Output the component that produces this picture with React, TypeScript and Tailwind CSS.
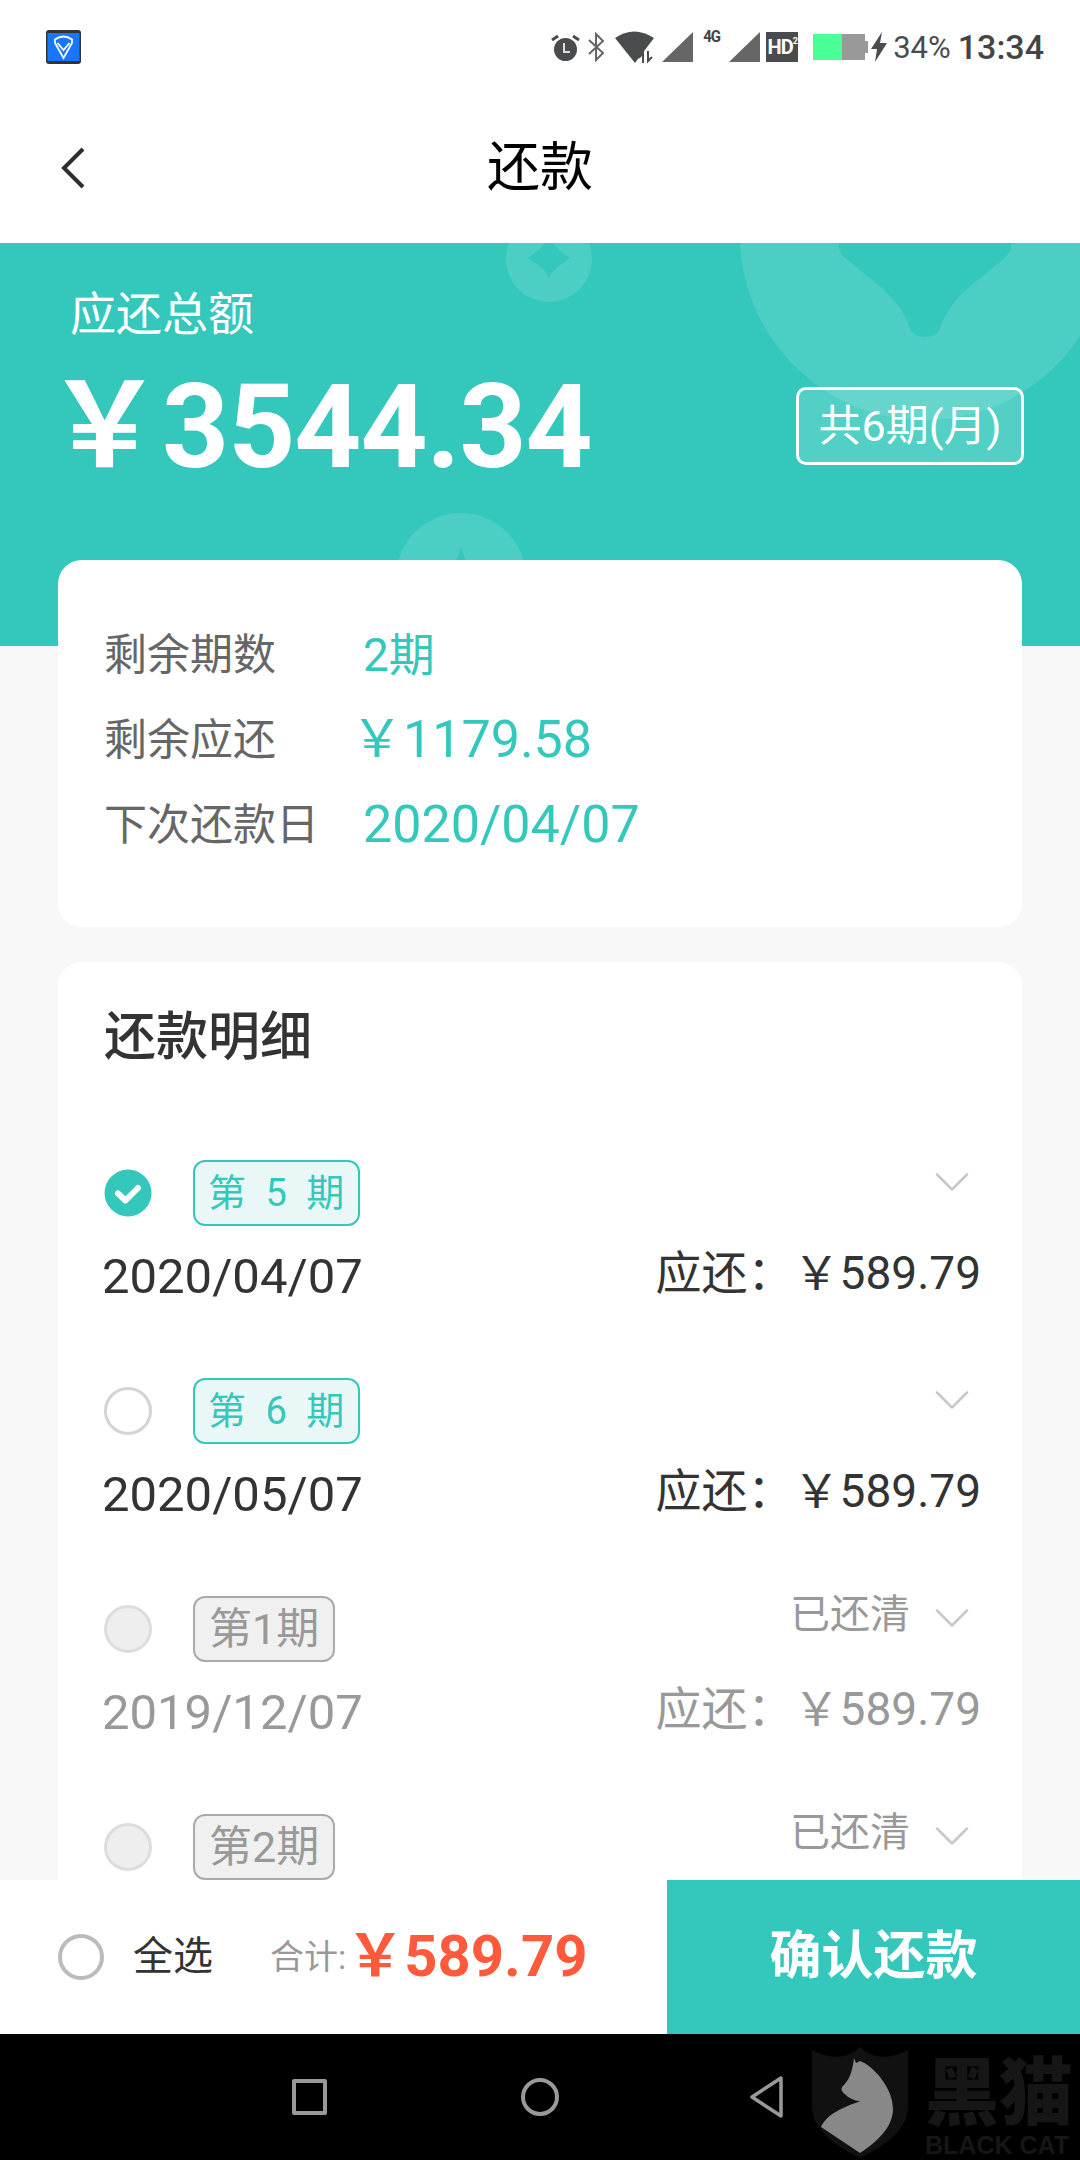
import { ChevronDown } from "lucide-react";

const installments = [
  { tag: "第 5 期", date: "2020/04/07", state: "checked" },
  { tag: "第 6 期", date: "2020/05/07", state: "open" },
  { tag: "第1期", date: "2019/12/07", state: "paid" },
  { tag: "第2期", state: "paid" },
];

function StatusBar() {
  return (
    <div className="h-[70px] shrink-0 flex items-center justify-between pl-[46px] pr-[36px] pt-[24px] bg-white">
      {/* App shield */}
      <svg width="35" height="34" viewBox="0 0 35 34">
        <rect x="0" y="0" width="35" height="34" rx="3" fill="#333" />
        <rect x="1.5" y="3" width="32" height="28" fill="#1677ff" />
        <path d="M9 9.5 Q17.5 3.5 26 9.5 L26 13 L17.5 28 L9 13 Z" fill="none" stroke="#fff" strokeWidth="1.8" />
        <path d="M11.5 13 L17.5 20 L23.5 13" fill="none" stroke="#fff" strokeWidth="1.8" />
      </svg>

      <div className="flex items-center text-[#444]">
        {/* Alarm */}
        <svg width="31" height="30" viewBox="0 0 31 30" className="mr-[6px]">
          <circle cx="15.5" cy="17.5" r="11.5" fill="#4a4b4d" />
          <path d="M2 8 L8 4 M29 8 L23 4" stroke="#4a4b4d" strokeWidth="3" />
          <path d="M14 11 V20 H20" fill="none" stroke="#ddd" strokeWidth="2" />
        </svg>
        {/* Bluetooth */}
        <svg width="19" height="30" viewBox="0 0 19 30" className="mr-[9px]">
          <path d="M2 8 L16 21 L9 28 V2 L16 9 L2 22" fill="none" stroke="#666" strokeWidth="2" />
        </svg>
        {/* Wifi */}
        <svg width="40" height="33" viewBox="0 0 40 33" className="mr-[7px]">
          <path d="M0 7 Q19 -6 39 7 L20 32 Z" fill="#4a4b4d" />
          <path d="M28 32 V22 L24 27 M33 20 V30 L37 26" fill="none" stroke="#4a4b4d" strokeWidth="2" />
        </svg>
        {/* Signal 1 */}
        <svg width="31" height="30" viewBox="0 0 31 30" className="mr-[10px]">
          <path d="M0 30 L31 0 V30 Z" fill="#666" />
        </svg>
        <span className="w-[20px] mr-[6px] self-start font-bold text-[15px] leading-[15px] text-[#444] tracking-[-1px] scale-y-110">4G</span>
        {/* Signal 2 */}
        <svg width="31" height="30" viewBox="0 0 31 30" className="mr-[6px]">
          <path d="M0 30 L31 0 V30 Z" fill="#666" />
        </svg>
        <div className="w-[32px] h-[30px] mr-[15px] bg-[#4a4b4d] text-white flex items-center justify-center font-bold text-[20px] leading-none tracking-[-1px]">
          HD<span className="text-[9px] self-start mt-[5px]">2</span>
        </div>
        {/* Battery */}
        <div className="flex items-center mr-[3px]">
          <div className="w-[29px] h-[26px] bg-[#4aff94]" />
          <div className="w-[23px] h-[26px] bg-[#999]" />
          <div className="w-[3px] h-[12px] bg-[#999]" />
        </div>
        <svg width="16" height="30" viewBox="0 0 16 30" className="mr-[6px]">
          <path d="M11 0 L0 17 H6 L4 30 L16 11 H9 Z" fill="#4a4b4d" />
        </svg>
        <span className="text-[31px] leading-none mr-[7px] text-[#4a4b4d]">34%</span>
        <span className="text-[34px] leading-none font-medium text-[#444]">13:34</span>
      </div>
    </div>
  );
}

function BannerDecor() {
  return (
    <svg className="absolute left-0 top-0" width="1080" height="403" viewBox="0 0 1080 403">
      <circle cx="925" cy="-8" r="185" fill="#fff" fillOpacity="0.12" />
      <path d="M839 -3 H1011 C1013 10 1006 14 996 22 C975 40 950 55 940 85 C937 97 913 97 910 85 C900 55 875 40 854 22 C844 14 837 10 839 -3 Z" fill="#34c8bc" />
      <circle cx="549" cy="16" r="43" fill="#fff" fillOpacity="0.12" />
      <path d="M549 -9 C553 3 560 8 570 15 C560 22 553 26 549 35 C545 26 538 22 528 15 C538 8 545 3 549 -9 Z" fill="#34c8bc" />
      <circle cx="461" cy="335" r="65" fill="#fff" fillOpacity="0.12" />
      <path d="M461 304 C464 316 470 325 482 335 C470 345 464 355 461 366 C458 355 452 345 440 335 C452 325 458 316 461 304 Z" fill="#34c8bc" />
    </svg>
  );
}

function Watermark() {
  return (
    <div className="absolute left-[812px] top-[13px] flex">
      <svg width="96" height="112" viewBox="0 0 96 112">
        <path d="M0 3 Q30 18 48 0 Q66 18 96 3 V60 Q96 88 48 111 Q0 88 0 60 Z" fill="#111" />
        <path d="M42 11 L44 16 L48 14 C60 18 81 40 81 62 C81 80 65 95 48 106 L9 80 C14 68 30 60 52 53 C46 56 40 52 36 50 C32 46 28 44 30 40 C36 34 40 28 42 11 Z" fill="#888" />
      </svg>
      <div className="ml-[17px] w-[152px] flex flex-col text-[#161616] font-bold">
        <span className="text-[74px] leading-[80px] font-black font-['Noto_Sans_CJK_SC',sans-serif] whitespace-nowrap">黑猫</span>
        <span className="mt-[5px] text-[25px] leading-[26px] whitespace-nowrap font-['Liberation_Sans',sans-serif]">BLACK CAT</span>
      </div>
    </div>
  );
}

function Selector({ state }: { state: string }) {
  if (state === "checked") {
    return (
      <svg width="48" height="48" viewBox="0 0 48 48">
        <circle cx="24" cy="24" r="23.5" fill="#34c8bc" />
        <path d="M14 24.5 L21.5 31.5 L34 19" fill="none" stroke="#fff" strokeWidth="6" strokeLinecap="round" strokeLinejoin="round" />
      </svg>
    );
  }
  return (
    <div
      className={`w-[48px] h-[48px] rounded-full border-[3px] ${
        state === "paid" ? "bg-[#eeeeee] border-[#dddddd]" : "bg-white border-[#d4d4d4]"
      }`}
    />
  );
}

function InstallmentRow({ tag, date, state }: { tag: string; date?: string; state: string }) {
  const paid = state === "paid";
  return (
    <div className="h-[218px] shrink-0 flex justify-between">
      <div className="flex flex-col">
        <div className="flex items-center h-[66px] pl-[2px]">
          <Selector state={state} />
          <div
            className={`ml-[41px] h-[66px] flex items-center rounded-[12px] border-[2px] leading-none whitespace-pre ${
              paid
                ? "px-[14px] text-[43px] bg-[#f0f0f0] border-[#aaaaaa] text-[#999]"
                : "px-[13px] text-[38px] bg-[#e9f8f7] border-[#34c8bc] text-[#34c8bc] tracking-[1px] [word-spacing:8px]"
            }`}
          >
            {tag}
          </div>
        </div>
        {date && <span className={`mt-[22px] text-[49px] leading-[58px] ${paid ? "text-[#999]" : "text-[#333]"}`}>{date}</span>}
      </div>
      <div className="flex flex-col items-end">
        <div className="h-[58px] flex items-center relative -top-[7px]">
          {paid && <span className="text-[40px] leading-none text-[#999] mr-[12px] relative -top-[3px]">已还清</span>}
          <ChevronDown className="w-[60px] h-[60px] shrink-0 mr-[-1px] text-[#c8c8c8]" strokeWidth={1} />
        </div>
        {date && (
          <div className={`mt-[26px] h-[58px] flex items-center text-[46px] leading-none ${paid ? "text-[#999]" : "text-[#333]"}`}>
            应还：￥589.79
          </div>
        )}
      </div>
    </div>
  );
}

export default function App() {
  return (
    <div className="w-[1080px] h-[2160px] flex flex-col overflow-hidden bg-[#f8f8f8] font-['Roboto','Noto_Sans_CJK_SC',sans-serif]">
      <StatusBar />

      {/* Header */}
      <header className="h-[173px] shrink-0 bg-white flex items-center justify-center relative pt-[24px]">
        <svg className="absolute left-[60px] top-[77px]" width="26" height="42" viewBox="0 0 26 42">
          <path d="M23 2 L4 21 L23 40" fill="none" stroke="#2f2f2f" strokeWidth="4" />
        </svg>
        <h1 className="text-[53px] leading-none text-black font-normal">还款</h1>
      </header>

      {/* Scroll area */}
      <main className="flex-1 min-h-0 overflow-hidden">
        <section className="relative h-[403px] bg-[#34c8bc] text-white">
          <BannerDecor />
          <div className="relative pl-[70px] pt-[43px]">
            <div className="text-[46px] leading-[56px]">应还总额</div>
            <div className="flex items-center mt-[26px] h-[118px] pr-[56px] justify-between">
              <div className="flex items-center font-bold text-[117px] leading-none tracking-[-1px] ml-[-24px]">￥3544.34</div>
              <div className="w-[228px] h-[78px] -mt-[2px] border-[3px] border-white rounded-[10px] bg-white/15 flex items-center justify-center text-[43px] leading-none whitespace-nowrap">
                共6期(月)
              </div>
            </div>
          </div>
        </section>

        <div className="px-[58px] -mt-[86px] relative flex flex-col gap-[35px]">
          {/* Summary */}
          <section className="h-[367px] bg-white rounded-[24px] pl-[46px] pr-[47px] pt-[66px]">
            <div className="flex items-center h-[58px]">
              <span className="w-[259px] text-[43px] leading-none text-[#666]">剩余期数</span>
              <span className="text-[46px] leading-none text-[#34c8bc]">2期</span>
            </div>
            <div className="flex items-center h-[58px] mt-[27px]">
              <span className="w-[247px] text-[43px] leading-none text-[#666]">剩余应还</span>
              <span className="text-[52px] leading-none text-[#34c8bc]">￥1179.58</span>
            </div>
            <div className="flex items-center h-[58px] mt-[27px]">
              <span className="w-[259px] text-[43px] leading-none text-[#666]">下次还款日</span>
              <span className="text-[52px] leading-none text-[#34c8bc]">2020/04/07</span>
            </div>
          </section>

          {/* Detail */}
          <section className="bg-white rounded-[24px] pl-[44px] pr-[41px] pt-[46px]">
            <h2 className="text-[52px] leading-[60px] font-medium text-[#333] ml-[2px]">还款明细</h2>
            <div className="mt-[92px] flex flex-col">
              {installments.map((item) => (
                <InstallmentRow key={item.tag} {...item} />
              ))}
            </div>
          </section>
        </div>
      </main>

      {/* Bottom action bar */}
      <div className="h-[154px] shrink-0 flex bg-white relative">
        <div className="flex-1 flex items-center pl-[58px]">
          <div className="w-[46px] h-[46px] rounded-full border-[4px] border-[#bbbbbb]" />
          <span className="ml-[29px] text-[40px] leading-none text-[#333]">全选</span>
          <span className="ml-[57px] text-[34px] leading-none text-[#999]">合计:</span>
          <span className="text-[58px] leading-none font-bold text-[#ff5a3c] relative -top-[1px]">￥589.79</span>
        </div>
        <button className="w-[413px] bg-[#34c8bc] text-white text-[52px] font-bold leading-none">确认还款</button>
      </div>

      {/* Nav bar */}
      <nav className="h-[126px] shrink-0 bg-black relative flex items-center justify-center pr-[4px]">
        <div className="w-[35px] h-[36px] border-[4px] border-[#999] rounded-[2px]" />
        <div className="ml-[194px] w-[38px] h-[38px] border-[4px] border-[#999] rounded-full" />
        <svg width="36" height="42" viewBox="0 0 34 42" className="ml-[190px]">
          <path d="M31 2 V40 L2 21 Z" fill="none" stroke="#999" strokeWidth="3.5" strokeLinejoin="round" />
        </svg>
        <Watermark />
      </nav>
    </div>
  );
}
